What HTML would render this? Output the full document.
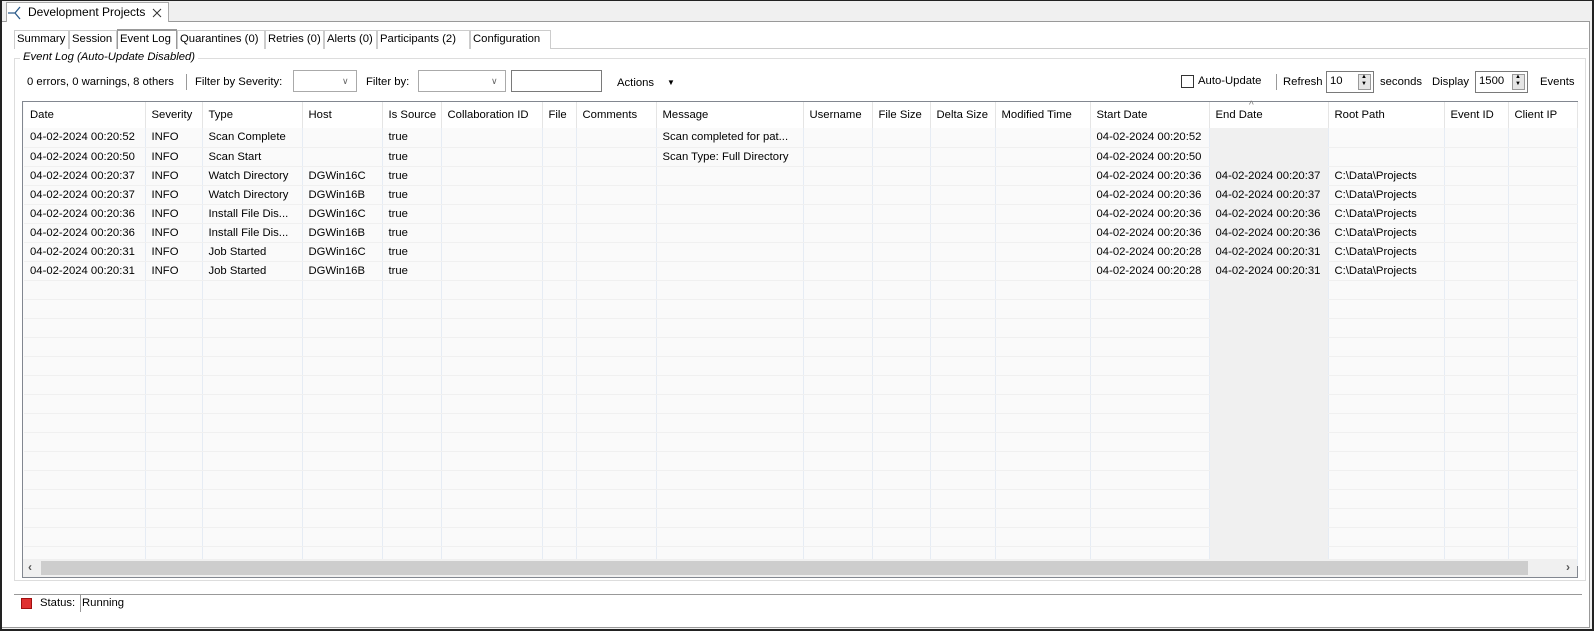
<!DOCTYPE html>
<html><head><meta charset="utf-8">
<style>
*{box-sizing:border-box;margin:0;padding:0}
body{width:1594px;height:631px;overflow:hidden;background:#f0f0f0;font-family:"Liberation Sans",sans-serif;font-size:11.3px;color:#000;position:relative}
.a{position:absolute;white-space:nowrap}
table{position:absolute;left:24px;top:102px;border-collapse:collapse;table-layout:fixed}
td,th{height:19px;padding:0 0 0 6px;font-weight:normal;text-align:left;white-space:nowrap;overflow:hidden;border-right:1px solid #e6ecf4;border-bottom:1px solid #f0f0f0;background:#fafafa;font-size:11.3px}
th{height:26px;background:#fff;border-right:1px solid #e5e5e5;border-bottom:none}
td.e{background:#f0f0f0}
.sep{position:absolute;width:1px;height:16px;background:#999}
.box{position:absolute;background:#fff;border:1px solid #7a7a7a}
.tab{position:absolute;top:30px;height:19px;border:1px solid #ccc;border-bottom:none;padding:2px 0 0 2px;background:#fff;white-space:nowrap;overflow:hidden}
</style></head><body>
<div class="a" style="left:0;top:21px;width:1590px;height:607px;background:#fff;border:1px solid #999;border-left:none"></div>
<div class="a" style="left:6px;top:2px;width:163px;height:20px;background:#fff;border:1px solid #aaa;border-bottom:none"></div>
<svg class="a" style="left:8px;top:6px" width="16" height="14"><path d="M0 7H7M12 1L7 7L12 13" stroke="#2b5b8a" stroke-width="1.3" fill="none"/></svg>
<div class="a" style="left:28px;top:5px;font-size:12px">Development Projects</div>
<svg class="a" style="left:152px;top:8px" width="10" height="10"><path d="M1 1L9 9M9 1L1 9" stroke="#333" stroke-width="1"/></svg>
<div class="a" style="left:14px;top:48px;width:1574px;height:1px;background:#ccc"></div>
<div class="tab" style="left:14px;width:55px">Summary</div>
<div class="tab" style="left:69px;width:48px">Session</div>
<div class="tab" style="left:117px;width:60px;top:29px;height:20px;border-top:2px solid #999;border-color:#999;z-index:2;padding-top:2px">Event Log</div>
<div class="tab" style="left:177px;width:88px">Quarantines (0)</div>
<div class="tab" style="left:265px;width:59px">Retries (0)</div>
<div class="tab" style="left:324px;width:53px">Alerts (0)</div>
<div class="tab" style="left:377px;width:93px">Participants (2)</div>
<div class="tab" style="left:470px;width:81px">Configuration</div>
<div class="a" style="left:14px;top:58px;width:1572px;height:523px;border:1px solid #ddd"></div>
<div class="a" style="left:20px;top:51px;background:#fff;padding:0 3px;font-style:italic">Event Log (Auto-Update Disabled)</div>
<div class="a" style="left:27px;top:76px">0 errors, 0 warnings, 8 others</div>
<div class="sep" style="left:186px;top:74px"></div>
<div class="a" style="left:195px;top:76px">Filter by Severity:</div>
<div class="box" style="left:293px;top:70px;width:64px;height:22px;border-color:#aaa"></div>
<div class="a" style="left:342px;top:76px;color:#666;font-size:9px">&#8744;</div>
<div class="a" style="left:366px;top:76px">Filter by:</div>
<div class="box" style="left:418px;top:70px;width:88px;height:22px;border-color:#aaa"></div>
<div class="a" style="left:491px;top:76px;color:#666;font-size:9px">&#8744;</div>
<div class="box" style="left:511px;top:70px;width:91px;height:22px"></div>
<div class="a" style="left:617px;top:77px">Actions</div>
<div class="a" style="left:667px;top:78px;font-size:8px">&#9660;</div>
<div class="box" style="left:1181px;top:75px;width:13px;height:13px;border-color:#333"></div>
<div class="a" style="left:1198px;top:75px">Auto-Update</div>
<div class="sep" style="left:1276px;top:74px"></div>
<div class="a" style="left:1283px;top:76px">Refresh</div>
<div class="box" style="left:1326px;top:71px;width:48px;height:22px"></div>
<div class="a" style="left:1330px;top:75px">10</div>
<div class="box" style="left:1358px;top:74px;width:13px;height:16px;background:#e5e5e5;border-color:#999"></div>
<div class="a" style="left:1361px;top:74px;font-size:6px;line-height:7px">&#9650;<br>&#9660;</div>
<div class="a" style="left:1380px;top:76px">seconds</div>
<div class="a" style="left:1432px;top:76px">Display</div>
<div class="box" style="left:1475px;top:71px;width:53px;height:22px"></div>
<div class="a" style="left:1479px;top:75px">1500</div>
<div class="box" style="left:1512px;top:74px;width:13px;height:16px;background:#e5e5e5;border-color:#999"></div>
<div class="a" style="left:1515px;top:74px;font-size:6px;line-height:7px">&#9650;<br>&#9660;</div>
<div class="a" style="left:1540px;top:76px">Events</div>
<div class="a" style="left:22px;top:101px;width:1556px;height:477px;border:1px solid #828790;background:#fafafa"></div>
<div class="a" style="left:1209px;top:128px;width:119px;height:431px;background:#f0f0f0"></div>
<table>
<colgroup><col style="width:121px"><col style="width:57px"><col style="width:100px"><col style="width:80px"><col style="width:59px"><col style="width:101px"><col style="width:34px"><col style="width:80px"><col style="width:147px"><col style="width:69px"><col style="width:58px"><col style="width:65px"><col style="width:95px"><col style="width:119px"><col style="width:119px"><col style="width:116px"><col style="width:64px"><col style="width:69px"></colgroup>
<tr><th>Date</th><th>Severity</th><th>Type</th><th>Host</th><th>Is Source</th><th>Collaboration ID</th><th>File</th><th>Comments</th><th>Message</th><th>Username</th><th>File Size</th><th>Delta Size</th><th>Modified Time</th><th>Start Date</th><th>End Date</th><th>Root Path</th><th>Event ID</th><th>Client IP</th></tr>
<tr><td>04-02-2024 00:20:52</td><td>INFO</td><td>Scan Complete</td><td></td><td>true</td><td></td><td></td><td></td><td>Scan completed for pat...</td><td></td><td></td><td></td><td></td><td>04-02-2024 00:20:52</td><td class="e"></td><td></td><td></td><td></td></tr>
<tr><td>04-02-2024 00:20:50</td><td>INFO</td><td>Scan Start</td><td></td><td>true</td><td></td><td></td><td></td><td>Scan Type: Full Directory</td><td></td><td></td><td></td><td></td><td>04-02-2024 00:20:50</td><td class="e"></td><td></td><td></td><td></td></tr>
<tr><td>04-02-2024 00:20:37</td><td>INFO</td><td>Watch Directory</td><td>DGWin16C</td><td>true</td><td></td><td></td><td></td><td></td><td></td><td></td><td></td><td></td><td>04-02-2024 00:20:36</td><td class="e">04-02-2024 00:20:37</td><td>C:\Data\Projects</td><td></td><td></td></tr>
<tr><td>04-02-2024 00:20:37</td><td>INFO</td><td>Watch Directory</td><td>DGWin16B</td><td>true</td><td></td><td></td><td></td><td></td><td></td><td></td><td></td><td></td><td>04-02-2024 00:20:36</td><td class="e">04-02-2024 00:20:37</td><td>C:\Data\Projects</td><td></td><td></td></tr>
<tr><td>04-02-2024 00:20:36</td><td>INFO</td><td>Install File Dis...</td><td>DGWin16C</td><td>true</td><td></td><td></td><td></td><td></td><td></td><td></td><td></td><td></td><td>04-02-2024 00:20:36</td><td class="e">04-02-2024 00:20:36</td><td>C:\Data\Projects</td><td></td><td></td></tr>
<tr><td>04-02-2024 00:20:36</td><td>INFO</td><td>Install File Dis...</td><td>DGWin16B</td><td>true</td><td></td><td></td><td></td><td></td><td></td><td></td><td></td><td></td><td>04-02-2024 00:20:36</td><td class="e">04-02-2024 00:20:36</td><td>C:\Data\Projects</td><td></td><td></td></tr>
<tr><td>04-02-2024 00:20:31</td><td>INFO</td><td>Job Started</td><td>DGWin16C</td><td>true</td><td></td><td></td><td></td><td></td><td></td><td></td><td></td><td></td><td>04-02-2024 00:20:28</td><td class="e">04-02-2024 00:20:31</td><td>C:\Data\Projects</td><td></td><td></td></tr>
<tr><td>04-02-2024 00:20:31</td><td>INFO</td><td>Job Started</td><td>DGWin16B</td><td>true</td><td></td><td></td><td></td><td></td><td></td><td></td><td></td><td></td><td>04-02-2024 00:20:28</td><td class="e">04-02-2024 00:20:31</td><td>C:\Data\Projects</td><td></td><td></td></tr>
<tr><td></td><td></td><td></td><td></td><td></td><td></td><td></td><td></td><td></td><td></td><td></td><td></td><td></td><td></td><td class="e"></td><td></td><td></td><td></td></tr>
<tr><td></td><td></td><td></td><td></td><td></td><td></td><td></td><td></td><td></td><td></td><td></td><td></td><td></td><td></td><td class="e"></td><td></td><td></td><td></td></tr>
<tr><td></td><td></td><td></td><td></td><td></td><td></td><td></td><td></td><td></td><td></td><td></td><td></td><td></td><td></td><td class="e"></td><td></td><td></td><td></td></tr>
<tr><td></td><td></td><td></td><td></td><td></td><td></td><td></td><td></td><td></td><td></td><td></td><td></td><td></td><td></td><td class="e"></td><td></td><td></td><td></td></tr>
<tr><td></td><td></td><td></td><td></td><td></td><td></td><td></td><td></td><td></td><td></td><td></td><td></td><td></td><td></td><td class="e"></td><td></td><td></td><td></td></tr>
<tr><td></td><td></td><td></td><td></td><td></td><td></td><td></td><td></td><td></td><td></td><td></td><td></td><td></td><td></td><td class="e"></td><td></td><td></td><td></td></tr>
<tr><td></td><td></td><td></td><td></td><td></td><td></td><td></td><td></td><td></td><td></td><td></td><td></td><td></td><td></td><td class="e"></td><td></td><td></td><td></td></tr>
<tr><td></td><td></td><td></td><td></td><td></td><td></td><td></td><td></td><td></td><td></td><td></td><td></td><td></td><td></td><td class="e"></td><td></td><td></td><td></td></tr>
<tr><td></td><td></td><td></td><td></td><td></td><td></td><td></td><td></td><td></td><td></td><td></td><td></td><td></td><td></td><td class="e"></td><td></td><td></td><td></td></tr>
<tr><td></td><td></td><td></td><td></td><td></td><td></td><td></td><td></td><td></td><td></td><td></td><td></td><td></td><td></td><td class="e"></td><td></td><td></td><td></td></tr>
<tr><td></td><td></td><td></td><td></td><td></td><td></td><td></td><td></td><td></td><td></td><td></td><td></td><td></td><td></td><td class="e"></td><td></td><td></td><td></td></tr>
<tr><td></td><td></td><td></td><td></td><td></td><td></td><td></td><td></td><td></td><td></td><td></td><td></td><td></td><td></td><td class="e"></td><td></td><td></td><td></td></tr>
<tr><td></td><td></td><td></td><td></td><td></td><td></td><td></td><td></td><td></td><td></td><td></td><td></td><td></td><td></td><td class="e"></td><td></td><td></td><td></td></tr>
<tr><td></td><td></td><td></td><td></td><td></td><td></td><td></td><td></td><td></td><td></td><td></td><td></td><td></td><td></td><td class="e"></td><td></td><td></td><td></td></tr>
<tr><td></td><td></td><td></td><td></td><td></td><td></td><td></td><td></td><td></td><td></td><td></td><td></td><td></td><td></td><td class="e"></td><td></td><td></td><td></td></tr>
</table>
<div class="a" style="left:1249px;top:100px;font-size:10px;color:#777">^</div>
<div class="a" style="left:23px;top:559px;width:1554px;height:18px;background:#f0f0f0"></div>
<div class="a" style="left:41px;top:561px;width:1487px;height:14px;background:#cdcdcd"></div>
<div class="a" style="left:28px;top:560px;font-size:12px;color:#555;font-weight:bold">&lsaquo;</div>
<div class="a" style="left:1566px;top:560px;font-size:12px;color:#555;font-weight:bold">&rsaquo;</div>
<div class="a" style="left:14px;top:594px;width:1568px;height:1px;background:#999"></div>
<div class="a" style="left:21px;top:598px;width:11px;height:11px;background:#e03030;border:1px solid #a01010"></div>
<div class="a" style="left:40px;top:597px">Status:</div>
<div class="a" style="left:80px;top:594px;width:1500px;height:18px;border-left:1px solid #999;border-top:1px solid #999;background:#fff"></div>
<div class="a" style="left:82px;top:597px">Running</div>
<div class="a" style="left:0;top:0;width:1594px;height:631px;border:2px solid #222;border-top:1px solid #222"></div>
</body></html>
